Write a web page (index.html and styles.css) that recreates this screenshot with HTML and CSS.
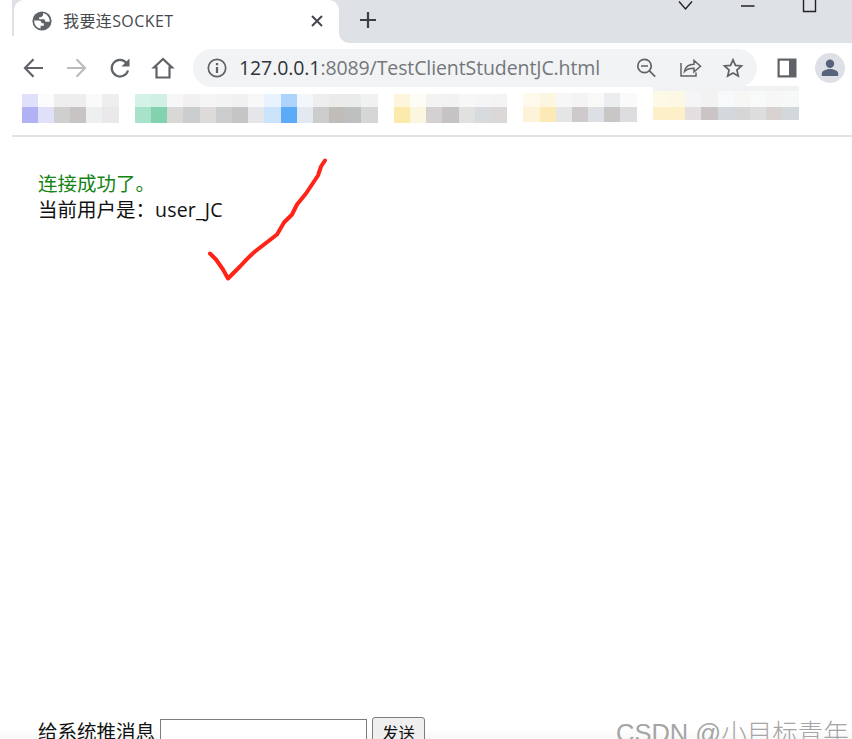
FILE: index.html
```html
<!DOCTYPE html>
<html lang="zh-CN">
<head>
<meta charset="utf-8">
<title>我要连SOCKET</title>
<link rel="stylesheet" href="styles.css">
</head>
<body>
<div class="window">
  <header class="tabs">
    <div class="tab">
      <svg class="globe" width="20" height="20" viewBox="0 0 20 20"><circle cx="10" cy="10" r="9.600" fill="#5f6368"/><path d="M2.200 9.400h4.300c2.200 0 3.100 1.300 3.100 2.800h2.200v2.500H8.600v2.900C4.900 17 2.200 14 2.200 9.400zM11 2.200v2.200L9.100 6.200H7.200v2h5.200l1.100 2.600h4.200C18 6.600 15 2.700 11 2.200z" fill="#fff"/></svg>
      <span class="tab-title">我要连SOCKET</span>
      <svg class="close" width="12" height="12" viewBox="0 0 12 12"><path d="M1 1l10 10M11 1L1 11" stroke="#45494d" stroke-width="2"/></svg>
    </div>
    <div class="strip">
      <svg class="plus" width="16" height="16" viewBox="0 0 16 16"><path d="M8 0v16M0 8h16" stroke="#3c4043" stroke-width="2.200"/></svg>
      <svg class="controls" width="140" height="14" viewBox="0 0 140 14" fill="none" stroke="#222" stroke-width="1.400"><path d="M1 1.500l6.500 7.500L14 1.500M63 6h13.500"/><path d="M125.500-1h12v12.500h-12z"/></svg>
    </div>
  </header>
  <nav class="toolbar">
    <svg class="nav" width="166" height="24" viewBox="0 0 166 24" fill="none" stroke="#5f6368" stroke-width="2.200"><path d="M31 12H14M21.500 3.300L13 12l8.500 8.700"/><path d="M55 12h17M64.500 3.300L73 12l-8.500 8.700" stroke="#babcbe"/><path d="M114.500 7A8.300 8.300 0 1 0 116 14.500"/><path d="M117.500 2.500v8h-8z" fill="#5f6368" stroke="none"/><path d="M142 11.500h2.500v10h13v-10h2.500L151 3z"/></svg>
    <div class="address">
      <svg width="20" height="20" viewBox="0 0 20 20" fill="none" stroke="#5f6368"><circle cx="10" cy="10" r="8.700" stroke-width="1.700"/><path d="M10 9v6M10 5v2.200" stroke-width="2.200"/></svg>
      <span class="url"><b>127.0.0.1</b>:8089/TestClientStudentJC.html</span>
      <svg class="actions" width="108" height="22" viewBox="0 0 108 22" fill="none" stroke="#5f6368" stroke-width="1.700"><circle cx="9.500" cy="9" r="6.700"/><path d="M14.200 13.700l6 6M6 9h7"/><path d="M46 6v13h15v-3.500" stroke-width="1.500"/><path d="M49.500 14.500c.8-4.800 4-7.100 9.500-7.200V3.500l6.500 5.800-6.500 5.600v-3.600c-4.500 0-7.200.7-9.500 3.200z" stroke-width="1.500"/><path d="M98 2.800l2.500 5.600 6 .6-4.600 4 1.400 6-5.300-3.100-5.300 3.100 1.400-6-4.600-4 6-.6z"/></svg>
    </div>
    <svg class="panel" width="20" height="20" viewBox="0 0 20 20"><path d="M.5.5h19v19H.5z" fill="#5f6368"/><path d="M2.700 2.700h9.300v14.600H2.700z" fill="#fff"/></svg>
    <svg class="avatar" width="30" height="30" viewBox="0 0 30 30"><circle cx="15" cy="15" r="15" fill="#dde1e7"/><circle cx="15" cy="10.800" r="4.200" fill="#56637a"/><path d="M6.800 23v-2.500c0-3 5-4.500 8.200-4.500s8.200 1.500 8.200 4.500V23z" fill="#56637a"/></svg>
  </nav>
  <div class="bookmarks" id="bookmarks"></div>
  <main class="page">
    <p class="ok">连接成功了。</p>
    <p>当前用户是：<span class="user">user_JC</span></p>
    <svg class="tick" width="130" height="130" viewBox="0 0 130 130"><path d="M5 98.500l6 6 7 10 5 9 12-12q8-9 15-15l22-17 7-12 8-8 5-10 9-11 12-18 3-9 4-6" fill="none" stroke="#ff2418" stroke-width="4" stroke-linecap="round" stroke-linejoin="round"/></svg>
    <form class="send">
      <label for="msg">给系统推消息</label>
      <input id="msg" type="text">
      <button type="button">发送</button>
      <span class="mark">CSDN @小目标青年</span>
    </form>
  </main>
</div>
<script src="bookmarks.js"></script>
</body>
</html>
```
FILE: styles.css
```css
* { box-sizing: border-box; }
body { margin: 0; background: #fff; color: #111; font-family: "Open Sans", "Noto Sans CJK SC", sans-serif; }
.window { width: 852px; height: 739px; overflow: hidden; display: flex; flex-direction: column; }
svg { display: block; flex: none; overflow: visible; }

.tabs { height: 43px; flex: none; display: flex; margin-left: 12px; background: linear-gradient(#dee1e6 36px, #fff 36px) left / 10px 100% no-repeat, linear-gradient(#dee1e6, #dee1e6) 310px 0 / 17px 12px no-repeat; }
.tab { width: 325px; height: 43px; margin-left: 2px; padding: 0 16px 2px 18px; display: flex; align-items: center; background: #fff; border-radius: 10px 10px 0 0; }
.tab-title { margin-left: 11px; flex: 1; font-size: 16px; line-height: 24px; color: #45494d; letter-spacing: 0.4px; }
.strip { flex: 1; background: #dee1e6; border-bottom-left-radius: 10px; display: flex; justify-content: space-between; padding: 0 34px 0 21px; }
.plus { margin-top: 12px; }

.toolbar { height: 49px; flex: none; padding-left: 12px; display: flex; align-items: center; }
.nav { margin-right: 15px; }
.address { width: 564px; height: 38px; border-radius: 19px; background: #f1f3f4; display: flex; align-items: center; padding: 0 14px; }
.url { flex: 1; margin-left: 12px; white-space: nowrap; font-size: 19.500px; line-height: 28px; letter-spacing: -0.1px; color: #74777b; }
.url b { font-weight: 400; color: #303338; }
.panel { margin-left: 20px; }
.avatar { margin-left: 18px; }

.bookmarks { height: 45px; flex: none; margin-left: 12px; padding-left: 9.500px; display: flex; align-items: flex-start; border-bottom: 2px solid #e3e3e4; }
.group { display: flex; margin-right: 16.200px; padding-top: 2px; }
.tile { width: 16.200px; height: 29px; }
.group:nth-child(4) { padding-top: 1px; }
.group:nth-child(5) { padding-top: 0; margin-top: -6px; border-top: 5px solid #f0f2f3; }

.page { flex: 1; position: relative; padding: 34px 0 0 38px; display: flex; flex-direction: column; background: linear-gradient(#fff 591px, #f8f8f8); }
.page p { margin: 0; font-size: 19.500px; line-height: 25.500px; }
.page .ok { color: #148414; }
.user { letter-spacing: 0.2px; }
.tick { position: absolute; left: 205px; top: 18px; }
.send { height: 24px; margin-top: auto; display: flex; align-items: flex-start; }
.send label { font-size: 19.500px; line-height: 33px; width: 122px; }
.send input { width: 207px; height: 29px; margin-top: 4px; border: 1.500px solid #7d7d7d; background: #fff; }
.send button { width: 53px; height: 32px; margin: 2px 0 0 5px; padding: 0; border: 1.500px solid #7d7d7d; border-radius: 3px; background: #efefef; font: 16.500px/28px "Noto Sans CJK SC", sans-serif; color: #111; }
.mark { margin-left: 191px; font-family: "Liberation Sans", "Noto Sans CJK SC", sans-serif; font-weight: 300; font-size: 25.500px; line-height: 37px; white-space: nowrap; color: #a5a5a5; }
```
FILE: bookmarks.js
```js
// Each tile is an upper and a lower colour.
const groups = [
  "e0e0fb b0b2f3,fcfcff e0e0f9,eeeeee cfcfcf,eeeeee c8c4c3,fafafa edf0ef,eeeeee ebe8ec",
  "d5f2e8 a8e2cb,d0f0e5 82d2b0,f7f7f7 dad8d6,f2f1f0 cccdcf,f5f5f5 dedad9,f3f3f3 cbccce,f1f1f1 c5c5c5,f8f8f8 e4e6ea,e8f3fe cce3fc,acd3fc 5babf8,f3f7fb e3e9f0,eeeeee cccccc,ebebeb c0bdb9,eaecec bdbfc1,f1f1f1 d6d6d6",
  "fdf5dc fce9ac,fdfcf5 faf6e0,f3f3f4 d5d0d1,f2f2f2 c6c3c4,f7f7f7 e1e2df,f5f5f5 d8dbdd,f4f4f4 ddd8d8",
  "fef9ea fcf3d8,fcf6e0 fbeab5,f7f7f8 e6e5e5,f4f4f4 cec9ca,f9f9f8 dce0e4,ecedef c8c7c6,fafafa dddde0",
  "fcf9e6 fdf0c8,fcf8e3 fdf0c8,f5f4f6 e3dfe0,f2f2f2 cbc4c4,f7fafa d3d8dc,f7f8f6 d6d6d6,f8fafa dcdddc,f7f7f7 d8d3d0,f7f9f8 d2d8dc"
];
const splits = [13, 13, 13, 14, 16];
const bar = document.getElementById("bookmarks");
groups.forEach((group, i) => {
  const box = document.createElement("div");
  box.className = "group";
  group.split(",").forEach(pair => {
    const [top, bottom] = pair.split(" ");
    const tile = document.createElement("span");
    tile.className = "tile";
    tile.style.background = `linear-gradient(#${top} ${splits[i]}px, #${bottom} ${splits[i]}px)`;
    box.append(tile);
  });
  bar.append(box);
});
```
